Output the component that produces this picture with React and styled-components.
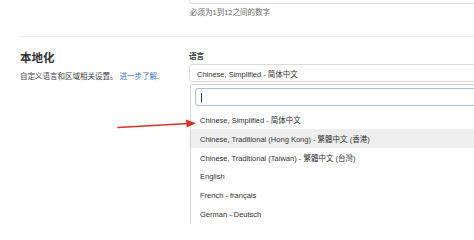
import React from 'react';
import styled, { createGlobalStyle } from 'styled-components';

const GlobalStyle = createGlobalStyle`
  html, body {
    margin: 0;
    padding: 0;
    background: #fff;
    overflow: hidden;
  }
  body {
    width: 474px;
    height: 225px;
    font-family: "Liberation Sans", "Noto Sans CJK SC", Arial, sans-serif;
    color: #333;
  }
`;

const Page = styled.div`
  position: relative;
  width: 474px;
  height: 225px;
  overflow: hidden;
`;

// 상단 필드 (잘린 부분)
const TopField = styled.div`
  margin-left: 189px;
  margin-top: -15px;
  width: 330px;
`;

const TextBox = styled.div`
  box-sizing: border-box;
  height: 19px;
  border: 1px solid #dcdcdc;
  border-radius: 3px;
  background: #fff;
`;

const Hint = styled.div`
  margin-top: 4px;
  padding-left: 1px;
  font-size: 7.5px;
  line-height: 10px;
  color: #666;
`;

const Divider = styled.hr`
  margin: 18px 0 0 20px;
  border: 0;
  border-top: 1px solid #eeeeee;
  height: 0;
`;

const Section = styled.div`
  display: flex;
  margin-top: 12px;
  padding-left: 20px;
`;

const Intro = styled.div`
  width: 169px;
  flex-shrink: 0;
`;

const Title = styled.h3`
  margin: 2px 0 0;
  font-size: 11.5px;
  line-height: 14px;
  font-weight: 600;
  color: #333;
`;

const Desc = styled.p`
  margin: 7px 0 0;
  font-size: 7.5px;
  line-height: 10px;
  color: #444;
`;

const Link = styled.a`
  color: #3a76bd;
  text-decoration: none;
`;

const Field = styled.div`
  width: 330px;
  flex-shrink: 0;
`;

const Label = styled.label`
  display: block;
  margin-top: 3px;
  font-size: 7.5px;
  line-height: 10px;
  font-weight: 700;
  color: #333;
`;

const Select = styled.div`
  box-sizing: border-box;
  margin-top: 2px;
  height: 18px;
  padding: 0 7px;
  display: flex;
  align-items: center;
  border: 1px solid #dcdcdc;
  border-radius: 3px;
  font-size: 7.5px;
  color: #333;
`;

const Dropdown = styled.div`
  box-sizing: border-box;
  margin-top: 2px;
  margin-left: 1px;
  padding: 3px 0 0;
  border: 1px solid #d6d6d6;
  border-bottom: 0;
  border-radius: 3px 3px 0 0;
  background: #fff;
`;

const Search = styled.div`
  box-sizing: border-box;
  margin: 0 3px 4px 4px;
  height: 18px;
  padding-left: 5px;
  display: flex;
  align-items: center;
  border: 1px solid #a9bfdc;
  border-radius: 3px;
`;

const Caret = styled.span`
  width: 1px;
  height: 9px;
  background: #333;
`;

const Option = styled.div`
  height: 19px;
  padding-left: 9px;
  display: flex;
  align-items: center;
  font-size: 7.5px;
  color: #333;
  background: ${(p) => (p.$active ? '#eeeeee' : 'transparent')};
`;

const Arrow = styled.svg`
  position: absolute;
  left: 0;
  top: 0;
  pointer-events: none;
`;

const languages = [
  'Chinese, Simplified - 简体中文',
  'Chinese, Traditional (Hong Kong) - 繁體中文 (香港)',
  'Chinese, Traditional (Taiwan) - 繁體中文 (台灣)',
  'English',
  'French - français',
  'German - Deutsch',
];

export default function App() {
  return (
    <Page>
      <GlobalStyle />
      <TopField>
        <TextBox />
        <Hint>必须为1到12之间的数字</Hint>
      </TopField>
      <Divider />
      <Section>
        <Intro>
          <Title>本地化</Title>
          <Desc>
            自定义语言和区域相关设置。 <Link href="#">进一步了解.</Link>
          </Desc>
        </Intro>
        <Field>
          <Label>语言</Label>
          <Select>{languages[0]}</Select>
          <Dropdown>
            <Search>
              <Caret />
            </Search>
            {languages.map((lang, i) => (
              <Option key={lang} $active={i === 1}>
                {lang}
              </Option>
            ))}
          </Dropdown>
        </Field>
      </Section>
      <Arrow width="474" height="225" viewBox="0 0 474 225">
        <line x1="118" y1="127.5" x2="193" y2="123.3" stroke="#d8332b" strokeWidth="1.6" strokeLinecap="round" />
        <path d="M186 119.6 L196 123.2 L186.6 127.4 Z" fill="#d8332b" />
      </Arrow>
    </Page>
  );
}
